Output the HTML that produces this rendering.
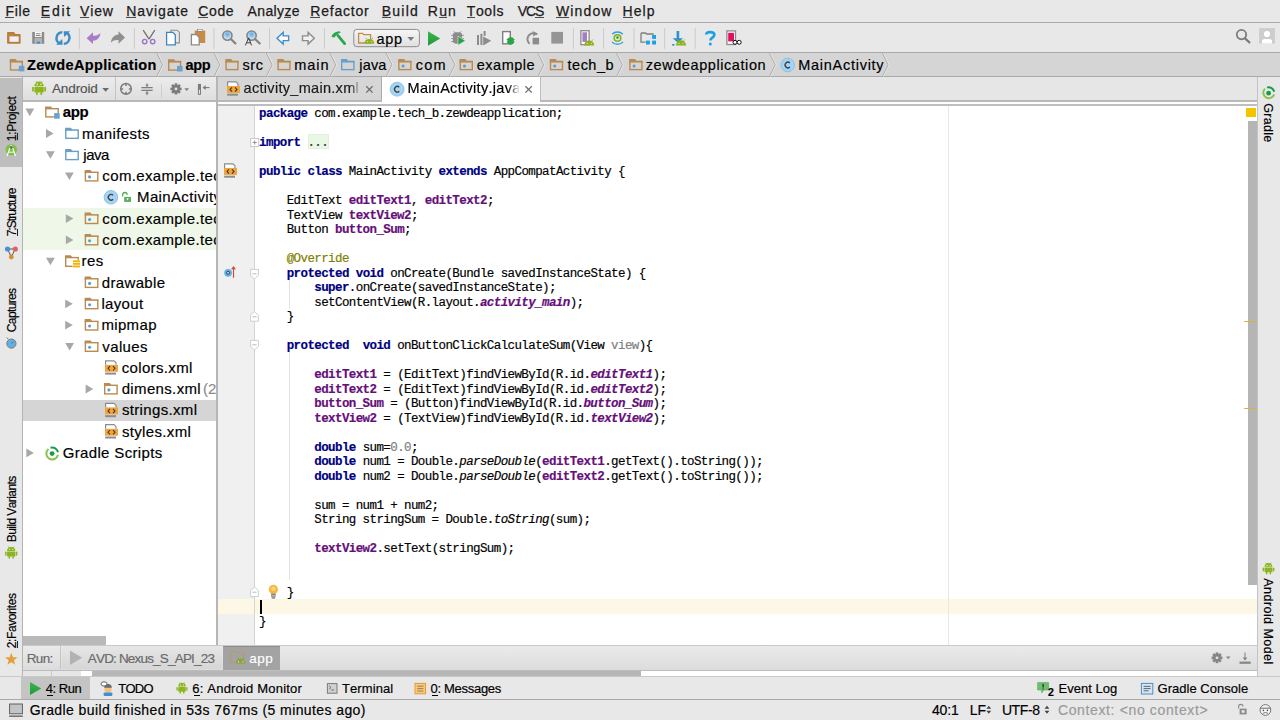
<!DOCTYPE html>
<html><head><meta charset="utf-8"><style>
html,body{margin:0;padding:0;width:1280px;height:720px;overflow:hidden;background:#e8e8e8;}
body{position:relative;font-family:'Liberation Sans',sans-serif;font-kerning:none;}
div,svg{position:absolute;}
div{-webkit-text-stroke:0.18px currentColor;}
</style></head><body>
<div style="left:0.00px;top:0.00px;width:1280px;height:22px;background:#e8e8e8;"></div>
<div style="left:0.00px;top:22.00px;width:1280px;height:1px;background:#ababab;"></div>
<div style="left:0.00px;top:23.00px;width:1280px;height:29px;background:#e8e8e8;"></div>
<div style="left:0.00px;top:52.00px;width:1280px;height:1px;background:#a9a9a9;"></div>
<div style="left:0.00px;top:53.00px;width:1280px;height:23px;background:#d5d5d5;"></div>
<div style="left:0.00px;top:76.00px;width:1280px;height:1px;background:#a9a9a9;"></div>
<div style="left:0.00px;top:77.00px;width:1280px;height:1px;background:#c6c6c6;"></div>
<div style="left:0.00px;top:77.00px;width:22px;height:599px;background:#e8e8e8;"></div>
<div style="left:0.00px;top:78.00px;width:22px;height:89px;background:#bebebe;"></div>
<div style="left:21.50px;top:77.00px;width:1.5px;height:599px;background:#b4b4b4;"></div>
<div style="left:23.00px;top:77.00px;width:194px;height:23px;background:linear-gradient(#ececec,#dedede);"></div>
<div style="left:115.00px;top:77.00px;width:1px;height:23px;background:#c4c4c4;"></div>
<div style="left:161.00px;top:84.00px;width:1px;height:14px;background:#cfcfcf;"></div>
<div style="left:23.00px;top:102.00px;width:193px;height:543px;background:#ffffff;"></div>
<div style="left:23.00px;top:207.85px;width:193px;height:42.6px;background:#eff7e8;"></div>
<div style="left:23.00px;top:399.55px;width:193px;height:21.3px;background:#d5d5d5;"></div>
<div style="left:23.00px;top:636.00px;width:83px;height:9px;background:#b9b9b9;"></div>
<div style="left:216.00px;top:77.00px;width:2px;height:568px;background:#b6b6b6;"></div>
<div style="left:218.00px;top:77.00px;width:1039px;height:23px;background:#e6e6e6;"></div>
<div style="left:218.00px;top:77.00px;width:163px;height:23px;background:#d6d6d6;"></div>
<div style="left:23.00px;top:100.00px;width:1234px;height:2px;background:#b8b8b8;"></div>
<div style="left:381.00px;top:77.00px;width:1px;height:23px;background:#acacac;"></div>
<div style="left:382.00px;top:77.00px;width:158px;height:27px;background:#ffffff;"></div>
<div style="left:540.00px;top:77.00px;width:1px;height:23px;background:#bdbdbd;"></div>
<div style="left:218.00px;top:102.00px;width:1039px;height:2px;background:#ffffff;"></div>
<div style="left:218.00px;top:104.00px;width:1039px;height:2px;background:#bebebe;"></div>
<div style="left:218.00px;top:106.00px;width:1039px;height:539px;background:#ffffff;"></div>
<div style="left:218.00px;top:106.00px;width:36px;height:539px;background:#f0f0f0;"></div>
<div style="left:254.00px;top:106.00px;width:1px;height:539px;background:#d4d4d4;"></div>
<div style="left:948.00px;top:106.00px;width:1px;height:539px;background:#e6e6e6;"></div>
<div style="left:218.00px;top:599.00px;width:1039px;height:14.5px;background:#fdf8e6;"></div>
<div style="left:254.00px;top:599.00px;width:1px;height:14.5px;background:#d4d4d4;"></div>
<div style="left:948.00px;top:599.00px;width:1px;height:14.5px;background:#ece8d8;"></div>
<div style="left:1257.00px;top:77.00px;width:1px;height:599px;background:#c3c3c3;"></div>
<div style="left:1258.00px;top:77.00px;width:22px;height:599px;background:#e8e8e8;"></div>
<div style="left:1248.00px;top:121.00px;width:9px;height:464px;background:#b5b5b5;"></div>
<div style="left:1246.00px;top:107.60px;width:9.5px;height:9.2px;background:#f2c500;"></div>
<div style="left:1244.00px;top:320.50px;width:13px;height:1.3px;background:#d9b43a;"></div>
<div style="left:1244.00px;top:407.80px;width:13px;height:1.3px;background:#d9b43a;"></div>
<div style="left:23.00px;top:645.00px;width:1234px;height:25px;background:linear-gradient(#ebebeb,#dcdcdc);"></div>
<div style="left:23.00px;top:645.00px;width:1234px;height:1px;background:#c9c9c9;"></div>
<div style="left:23.00px;top:669.50px;width:1234px;height:1px;background:#bdbdbd;"></div>
<div style="left:60.00px;top:646.00px;width:1px;height:23px;background:#c4c4c4;"></div>
<div style="left:62.00px;top:646.00px;width:160px;height:23px;background:linear-gradient(#e6e6e6,#d6d6d6);border-radius:2px;"></div>
<div style="left:222.50px;top:646.00px;width:57.5px;height:23.5px;background:#a3a3a3;"></div>
<div style="left:222.50px;top:646.00px;width:57.5px;height:1.2px;background:#8e8e8e;"></div>
<div style="left:23.00px;top:670.50px;width:1234px;height:6px;background:#ffffff;"></div>
<div style="left:23.00px;top:670.50px;width:58px;height:6px;background:#e6e6e6;"></div>
<div style="left:51.00px;top:670.50px;width:1px;height:6px;background:#c8c8c8;"></div>
<div style="left:92.00px;top:670.50px;width:549px;height:6px;background:#b7b7b7;"></div>
<div style="left:0.00px;top:676.00px;width:1280px;height:1px;background:#c9c9c9;"></div>
<div style="left:0.00px;top:677.00px;width:1280px;height:22px;background:#e8e8e8;"></div>
<div style="left:20.50px;top:677.00px;width:69.5px;height:22px;background:#c4c4c4;"></div>
<div style="left:0.00px;top:699.00px;width:1280px;height:1px;background:#a9a9a9;"></div>
<div style="left:0.00px;top:700.00px;width:1280px;height:20px;background:#e8e8e8;"></div>
<div style="left:5.45px;top:10.95px;font-family:'Liberation Sans', sans-serif;font-size:14px;color:#1b1b1b;line-height:0;white-space:pre;letter-spacing:0.671px;-webkit-text-stroke:0.25px #1b1b1b;">File</div>
<div style="left:5.45px;top:16.90px;width:8.55px;height:1.3px;background:#4a4a4a;"></div>
<div style="left:40.85px;top:10.95px;font-family:'Liberation Sans', sans-serif;font-size:14px;color:#1b1b1b;line-height:0;white-space:pre;letter-spacing:1.709px;-webkit-text-stroke:0.25px #1b1b1b;">Edit</div>
<div style="left:40.85px;top:16.90px;width:9.34px;height:1.3px;background:#4a4a4a;"></div>
<div style="left:79.94px;top:10.95px;font-family:'Liberation Sans', sans-serif;font-size:14px;color:#1b1b1b;line-height:0;white-space:pre;letter-spacing:0.894px;-webkit-text-stroke:0.25px #1b1b1b;">View</div>
<div style="left:79.94px;top:16.90px;width:9.34px;height:1.3px;background:#4a4a4a;"></div>
<div style="left:126.25px;top:10.95px;font-family:'Liberation Sans', sans-serif;font-size:14px;color:#1b1b1b;line-height:0;white-space:pre;letter-spacing:0.945px;-webkit-text-stroke:0.25px #1b1b1b;">Navigate</div>
<div style="left:126.25px;top:16.90px;width:10.11px;height:1.3px;background:#4a4a4a;"></div>
<div style="left:198.29px;top:10.95px;font-family:'Liberation Sans', sans-serif;font-size:14px;color:#1b1b1b;line-height:0;white-space:pre;letter-spacing:0.621px;-webkit-text-stroke:0.25px #1b1b1b;">Code</div>
<div style="left:198.29px;top:16.90px;width:10.11px;height:1.3px;background:#4a4a4a;"></div>
<div style="left:247.57px;top:10.95px;font-family:'Liberation Sans', sans-serif;font-size:14px;color:#1b1b1b;line-height:0;white-space:pre;letter-spacing:0.374px;-webkit-text-stroke:0.25px #1b1b1b;">Analyze</div>
<div style="left:284.46px;top:16.90px;width:7.0px;height:1.3px;background:#4a4a4a;"></div>
<div style="left:310.35px;top:10.95px;font-family:'Liberation Sans', sans-serif;font-size:14px;color:#1b1b1b;line-height:0;white-space:pre;letter-spacing:0.782px;-webkit-text-stroke:0.25px #1b1b1b;">Refactor</div>
<div style="left:310.35px;top:16.90px;width:10.11px;height:1.3px;background:#4a4a4a;"></div>
<div style="left:381.65px;top:10.95px;font-family:'Liberation Sans', sans-serif;font-size:14px;color:#1b1b1b;line-height:0;white-space:pre;letter-spacing:1.28px;-webkit-text-stroke:0.25px #1b1b1b;">Build</div>
<div style="left:381.65px;top:16.90px;width:9.34px;height:1.3px;background:#4a4a4a;"></div>
<div style="left:427.85px;top:10.95px;font-family:'Liberation Sans', sans-serif;font-size:14px;color:#1b1b1b;line-height:0;white-space:pre;letter-spacing:1.188px;-webkit-text-stroke:0.25px #1b1b1b;">Run</div>
<div style="left:439.15px;top:16.90px;width:7.79px;height:1.3px;background:#4a4a4a;"></div>
<div style="left:466.69px;top:10.95px;font-family:'Liberation Sans', sans-serif;font-size:14px;color:#1b1b1b;line-height:0;white-space:pre;letter-spacing:0.646px;-webkit-text-stroke:0.25px #1b1b1b;">Tools</div>
<div style="left:466.69px;top:16.90px;width:8.55px;height:1.3px;background:#4a4a4a;"></div>
<div style="left:517.74px;top:10.95px;font-family:'Liberation Sans', sans-serif;font-size:14px;color:#1b1b1b;line-height:0;white-space:pre;letter-spacing:-1.141px;-webkit-text-stroke:0.25px #1b1b1b;">VCS</div>
<div style="left:534.90px;top:16.90px;width:9.34px;height:1.3px;background:#4a4a4a;"></div>
<div style="left:555.94px;top:10.95px;font-family:'Liberation Sans', sans-serif;font-size:14px;color:#1b1b1b;line-height:0;white-space:pre;letter-spacing:1.147px;-webkit-text-stroke:0.25px #1b1b1b;">Window</div>
<div style="left:555.94px;top:16.90px;width:13.21px;height:1.3px;background:#4a4a4a;"></div>
<div style="left:622.55px;top:10.95px;font-family:'Liberation Sans', sans-serif;font-size:14px;color:#1b1b1b;line-height:0;white-space:pre;letter-spacing:1.081px;-webkit-text-stroke:0.25px #1b1b1b;">Help</div>
<div style="left:622.55px;top:16.90px;width:10.11px;height:1.3px;background:#4a4a4a;"></div>
<div style="left:26.97px;top:65.18px;font-family:'Liberation Sans', sans-serif;font-size:14.5px;color:#000;line-height:0;white-space:pre;font-weight:bold;letter-spacing:0.358px;">ZewdeApplication</div>
<div style="left:185.58px;top:65.18px;font-family:'Liberation Sans', sans-serif;font-size:14.5px;color:#000;line-height:0;white-space:pre;font-weight:bold;letter-spacing:-0.38px;">app</div>
<div style="left:242.40px;top:65.18px;font-family:'Liberation Sans', sans-serif;font-size:14.5px;color:#000;line-height:0;white-space:pre;letter-spacing:0.579px;">src</div>
<div style="left:294.34px;top:65.18px;font-family:'Liberation Sans', sans-serif;font-size:14.5px;color:#000;line-height:0;white-space:pre;letter-spacing:0.925px;">main</div>
<div style="left:359.35px;top:65.18px;font-family:'Liberation Sans', sans-serif;font-size:14.5px;color:#000;line-height:0;white-space:pre;letter-spacing:0.149px;">java</div>
<div style="left:415.78px;top:65.18px;font-family:'Liberation Sans', sans-serif;font-size:14.5px;color:#000;line-height:0;white-space:pre;letter-spacing:1.189px;">com</div>
<div style="left:476.78px;top:65.18px;font-family:'Liberation Sans', sans-serif;font-size:14.5px;color:#000;line-height:0;white-space:pre;letter-spacing:0.509px;">example</div>
<div style="left:567.58px;top:65.18px;font-family:'Liberation Sans', sans-serif;font-size:14.5px;color:#000;line-height:0;white-space:pre;letter-spacing:0.479px;">tech_b</div>
<div style="left:645.71px;top:65.18px;font-family:'Liberation Sans', sans-serif;font-size:14.5px;color:#000;line-height:0;white-space:pre;letter-spacing:0.579px;">zewdeapplication</div>
<div style="left:798.21px;top:65.18px;font-family:'Liberation Sans', sans-serif;font-size:14.5px;color:#000;line-height:0;white-space:pre;letter-spacing:0.733px;">MainActivity</div>
<div style="left:23.0px;top:101.0px;width:193px;height:544px;overflow:hidden;">
<div style="left:39.86px;top:11.20px;font-family:'Liberation Sans', sans-serif;font-size:15px;color:#000;line-height:0;white-space:pre;font-weight:bold;letter-spacing:-0.456px;">app</div>
<div style="left:59.00px;top:32.50px;font-family:'Liberation Sans', sans-serif;font-size:15px;color:#000;line-height:0;white-space:pre;letter-spacing:0.419px;">manifests</div>
<div style="left:60.37px;top:53.80px;font-family:'Liberation Sans', sans-serif;font-size:15px;color:#000;line-height:0;white-space:pre;letter-spacing:-0.494px;">java</div>
<div style="left:79.36px;top:75.10px;font-family:'Liberation Sans', sans-serif;font-size:15px;color:#000;line-height:0;white-space:pre;letter-spacing:0.35px;">com.example.tech_b.zewdeapplication</div>
<div style="left:114.07px;top:96.40px;font-family:'Liberation Sans', sans-serif;font-size:15px;color:#000;line-height:0;white-space:pre;letter-spacing:0.35px;">MainActivity</div>
<div style="left:79.36px;top:117.70px;font-family:'Liberation Sans', sans-serif;font-size:15px;color:#000;line-height:0;white-space:pre;letter-spacing:0.35px;">com.example.tech_b.zewdeapplication</div>
<div style="left:79.36px;top:139.00px;font-family:'Liberation Sans', sans-serif;font-size:15px;color:#000;line-height:0;white-space:pre;letter-spacing:0.35px;">com.example.tech_b.zewdeapplication</div>
<div style="left:58.60px;top:160.30px;font-family:'Liberation Sans', sans-serif;font-size:15px;color:#000;line-height:0;white-space:pre;letter-spacing:0.35px;">res</div>
<div style="left:78.77px;top:181.60px;font-family:'Liberation Sans', sans-serif;font-size:15px;color:#000;line-height:0;white-space:pre;letter-spacing:0.35px;">drawable</div>
<div style="left:78.39px;top:202.90px;font-family:'Liberation Sans', sans-serif;font-size:15px;color:#000;line-height:0;white-space:pre;letter-spacing:0.35px;">layout</div>
<div style="left:78.40px;top:224.20px;font-family:'Liberation Sans', sans-serif;font-size:15px;color:#000;line-height:0;white-space:pre;letter-spacing:0.35px;">mipmap</div>
<div style="left:79.35px;top:245.50px;font-family:'Liberation Sans', sans-serif;font-size:15px;color:#000;line-height:0;white-space:pre;letter-spacing:0.35px;">values</div>
<div style="left:98.66px;top:266.80px;font-family:'Liberation Sans', sans-serif;font-size:15px;color:#000;line-height:0;white-space:pre;letter-spacing:0.35px;">colors.xml</div>
<div style="left:98.67px;top:288.10px;font-family:'Liberation Sans', sans-serif;font-size:15px;color:#000;line-height:0;white-space:pre;letter-spacing:0.35px;">dimens.xml</div>
<div style="left:98.88px;top:309.40px;font-family:'Liberation Sans', sans-serif;font-size:15px;color:#000;line-height:0;white-space:pre;letter-spacing:0.35px;">strings.xml</div>
<div style="left:98.88px;top:330.70px;font-family:'Liberation Sans', sans-serif;font-size:15px;color:#000;line-height:0;white-space:pre;letter-spacing:0.35px;">styles.xml</div>
<div style="left:39.65px;top:352.00px;font-family:'Liberation Sans', sans-serif;font-size:15px;color:#000;line-height:0;white-space:pre;letter-spacing:0.35px;">Gradle Scripts</div>
</div>
<div style="left:51.97px;top:89.19px;font-family:'Liberation Sans', sans-serif;font-size:13.6px;color:#555555;line-height:0;white-space:pre;letter-spacing:-0.162px;">Android</div>
<div style="left:240.0px;top:77.0px;width:122px;height:23px;overflow:hidden;-webkit-mask-image:linear-gradient(90deg,#000 110px,transparent 121px);">
<div style="left:3.58px;top:10.58px;font-family:'Liberation Sans', sans-serif;font-size:14.5px;color:#1a1a1a;line-height:0;white-space:pre;letter-spacing:0.3px;">activity_main.xml</div>
</div>
<div style="left:405.0px;top:77.0px;width:116px;height:23px;overflow:hidden;-webkit-mask-image:linear-gradient(90deg,#000 103px,transparent 115px);">
<div style="left:2.51px;top:10.58px;font-family:'Liberation Sans', sans-serif;font-size:14.5px;color:#000;line-height:0;white-space:pre;letter-spacing:0.3px;">MainActivity.java</div>
</div>
<div style="left:26.69px;top:658.72px;font-family:'Liberation Sans', sans-serif;font-size:13.5px;color:#6a6a6a;line-height:0;white-space:pre;letter-spacing:-0.659px;">Run:</div>
<div style="left:87.77px;top:658.72px;font-family:'Liberation Sans', sans-serif;font-size:13.5px;color:#6a6a6a;line-height:0;white-space:pre;letter-spacing:-0.817px;">AVD: Nexus_S_API_23</div>
<div style="left:249.23px;top:658.72px;font-family:'Liberation Sans', sans-serif;font-size:13.5px;color:#ffffff;line-height:0;white-space:pre;letter-spacing:0.508px;">app</div>
<div style="left:45.70px;top:688.70px;font-family:'Liberation Sans', sans-serif;font-size:13px;color:#000;line-height:0;white-space:pre;letter-spacing:-0.432px;">4: Run</div>
<div style="left:46.50px;top:694.80px;width:6.5px;height:1.1px;background:#000;"></div>
<div style="left:118.31px;top:688.70px;font-family:'Liberation Sans', sans-serif;font-size:13px;color:#000;line-height:0;white-space:pre;letter-spacing:-0.746px;">TODO</div>
<div style="left:192.34px;top:688.70px;font-family:'Liberation Sans', sans-serif;font-size:13px;color:#000;line-height:0;white-space:pre;letter-spacing:0.191px;">6: Android Monitor</div>
<div style="left:193.50px;top:694.80px;width:6.5px;height:1.1px;background:#000;"></div>
<div style="left:342.01px;top:688.70px;font-family:'Liberation Sans', sans-serif;font-size:13px;color:#000;line-height:0;white-space:pre;letter-spacing:0.085px;">Terminal</div>
<div style="left:430.49px;top:688.70px;font-family:'Liberation Sans', sans-serif;font-size:13px;color:#000;line-height:0;white-space:pre;letter-spacing:-0.293px;">0: Messages</div>
<div style="left:431.50px;top:694.80px;width:6.5px;height:1.1px;background:#000;"></div>
<div style="left:1058.53px;top:688.70px;font-family:'Liberation Sans', sans-serif;font-size:13px;color:#000;line-height:0;white-space:pre;letter-spacing:0.032px;">Event Log</div>
<div style="left:1157.55px;top:688.70px;font-family:'Liberation Sans', sans-serif;font-size:13px;color:#000;line-height:0;white-space:pre;letter-spacing:0.023px;">Gradle Console</div>
<div style="left:29.80px;top:709.65px;font-family:'Liberation Sans', sans-serif;font-size:14px;color:#000;line-height:0;white-space:pre;letter-spacing:0.402px;">Gradle build finished in 53s 767ms (5 minutes ago)</div>
<div style="left:931.93px;top:709.65px;font-family:'Liberation Sans', sans-serif;font-size:14px;color:#000;line-height:0;white-space:pre;letter-spacing:-0.164px;">40:1</div>
<div style="left:969.85px;top:709.65px;font-family:'Liberation Sans', sans-serif;font-size:14px;color:#000;line-height:0;white-space:pre;letter-spacing:-0.029px;">LF</div>
<div style="left:1001.92px;top:709.65px;font-family:'Liberation Sans', sans-serif;font-size:14px;color:#000;line-height:0;white-space:pre;letter-spacing:-0.393px;">UTF-8</div>
<div style="left:1057.89px;top:709.65px;font-family:'Liberation Sans', sans-serif;font-size:14px;color:#9a9a9a;line-height:0;white-space:pre;letter-spacing:0.641px;">Context: &lt;no context&gt;</div>
<div style="left:308.00px;top:134.20px;width:20.75px;height:14.5px;background:#e9f7e5;box-shadow:inset 0 0 0 1px #e2f1dd;"></div>
<div style="left:288.50px;top:279.50px;width:1px;height:29px;background:#e3e3e3;"></div>
<div style="left:288.50px;top:352.00px;width:1px;height:228px;background:#e3e3e3;"></div>
<div style="left:259.10px;top:113.87px;font-family:'Liberation Mono', monospace;font-size:12.5px;color:#000;line-height:0;white-space:pre;letter-spacing:-0.6px;"><span style="color:#000080;font-weight:bold;">package</span> com.example.tech_b.zewdeapplication;</div>
<div style="left:259.10px;top:142.91px;font-family:'Liberation Mono', monospace;font-size:12.5px;color:#000;line-height:0;white-space:pre;letter-spacing:-0.6px;"><span style="color:#000080;font-weight:bold;">import</span> <span style="color:#333;">...</span></div>
<div style="left:259.10px;top:171.95px;font-family:'Liberation Mono', monospace;font-size:12.5px;color:#000;line-height:0;white-space:pre;letter-spacing:-0.6px;"><span style="color:#000080;font-weight:bold;">public</span> <span style="color:#000080;font-weight:bold;">class</span> MainActivity <span style="color:#000080;font-weight:bold;">extends</span> AppCompatActivity {</div>
<div style="left:259.10px;top:200.99px;font-family:'Liberation Mono', monospace;font-size:12.5px;color:#000;line-height:0;white-space:pre;letter-spacing:-0.6px;">    EditText <span style="color:#660e7a;font-weight:bold;">editText1</span>, <span style="color:#660e7a;font-weight:bold;">editText2</span>;</div>
<div style="left:259.10px;top:215.51px;font-family:'Liberation Mono', monospace;font-size:12.5px;color:#000;line-height:0;white-space:pre;letter-spacing:-0.6px;">    TextView <span style="color:#660e7a;font-weight:bold;">textView2</span>;</div>
<div style="left:259.10px;top:230.03px;font-family:'Liberation Mono', monospace;font-size:12.5px;color:#000;line-height:0;white-space:pre;letter-spacing:-0.6px;">    Button <span style="color:#660e7a;font-weight:bold;">button_Sum</span>;</div>
<div style="left:259.10px;top:259.07px;font-family:'Liberation Mono', monospace;font-size:12.5px;color:#000;line-height:0;white-space:pre;letter-spacing:-0.6px;">    <span style="color:#808000;">@Override</span></div>
<div style="left:259.10px;top:273.59px;font-family:'Liberation Mono', monospace;font-size:12.5px;color:#000;line-height:0;white-space:pre;letter-spacing:-0.6px;">    <span style="color:#000080;font-weight:bold;">protected</span> <span style="color:#000080;font-weight:bold;">void</span> onCreate(Bundle savedInstanceState) {</div>
<div style="left:259.10px;top:288.11px;font-family:'Liberation Mono', monospace;font-size:12.5px;color:#000;line-height:0;white-space:pre;letter-spacing:-0.6px;">        <span style="color:#000080;font-weight:bold;">super</span>.onCreate(savedInstanceState);</div>
<div style="left:259.10px;top:302.63px;font-family:'Liberation Mono', monospace;font-size:12.5px;color:#000;line-height:0;white-space:pre;letter-spacing:-0.6px;">        setContentView(R.layout.<span style="color:#660e7a;font-weight:bold;font-style:italic;">activity_main</span>);</div>
<div style="left:259.10px;top:317.15px;font-family:'Liberation Mono', monospace;font-size:12.5px;color:#000;line-height:0;white-space:pre;letter-spacing:-0.6px;">    }</div>
<div style="left:259.10px;top:346.19px;font-family:'Liberation Mono', monospace;font-size:12.5px;color:#000;line-height:0;white-space:pre;letter-spacing:-0.6px;">    <span style="color:#000080;font-weight:bold;">protected</span>  <span style="color:#000080;font-weight:bold;">void</span> onButtonClickCalculateSum(View <span style="color:#808080;">view</span>){</div>
<div style="left:259.10px;top:375.23px;font-family:'Liberation Mono', monospace;font-size:12.5px;color:#000;line-height:0;white-space:pre;letter-spacing:-0.6px;">        <span style="color:#660e7a;font-weight:bold;">editText1</span> = (EditText)findViewById(R.id.<span style="color:#660e7a;font-weight:bold;font-style:italic;">editText1</span>);</div>
<div style="left:259.10px;top:389.75px;font-family:'Liberation Mono', monospace;font-size:12.5px;color:#000;line-height:0;white-space:pre;letter-spacing:-0.6px;">        <span style="color:#660e7a;font-weight:bold;">editText2</span> = (EditText)findViewById(R.id.<span style="color:#660e7a;font-weight:bold;font-style:italic;">editText2</span>);</div>
<div style="left:259.10px;top:404.27px;font-family:'Liberation Mono', monospace;font-size:12.5px;color:#000;line-height:0;white-space:pre;letter-spacing:-0.6px;">        <span style="color:#660e7a;font-weight:bold;">button_Sum</span> = (Button)findViewById(R.id.<span style="color:#660e7a;font-weight:bold;font-style:italic;">button_Sum</span>);</div>
<div style="left:259.10px;top:418.79px;font-family:'Liberation Mono', monospace;font-size:12.5px;color:#000;line-height:0;white-space:pre;letter-spacing:-0.6px;">        <span style="color:#660e7a;font-weight:bold;">textView2</span> = (TextView)findViewById(R.id.<span style="color:#660e7a;font-weight:bold;font-style:italic;">textView2</span>);</div>
<div style="left:259.10px;top:447.83px;font-family:'Liberation Mono', monospace;font-size:12.5px;color:#000;line-height:0;white-space:pre;letter-spacing:-0.6px;">        <span style="color:#000080;font-weight:bold;">double</span> sum=<span style="color:#808080;">0.0</span>;</div>
<div style="left:259.10px;top:462.35px;font-family:'Liberation Mono', monospace;font-size:12.5px;color:#000;line-height:0;white-space:pre;letter-spacing:-0.6px;">        <span style="color:#000080;font-weight:bold;">double</span> num1 = Double.<span style="font-style:italic;">parseDouble</span>(<span style="color:#660e7a;font-weight:bold;">editText1</span>.getText().toString());</div>
<div style="left:259.10px;top:476.87px;font-family:'Liberation Mono', monospace;font-size:12.5px;color:#000;line-height:0;white-space:pre;letter-spacing:-0.6px;">        <span style="color:#000080;font-weight:bold;">double</span> num2 = Double.<span style="font-style:italic;">parseDouble</span>(<span style="color:#660e7a;font-weight:bold;">editText2</span>.getText().toString());</div>
<div style="left:259.10px;top:505.91px;font-family:'Liberation Mono', monospace;font-size:12.5px;color:#000;line-height:0;white-space:pre;letter-spacing:-0.6px;">        sum = num1 + num2;</div>
<div style="left:259.10px;top:520.43px;font-family:'Liberation Mono', monospace;font-size:12.5px;color:#000;line-height:0;white-space:pre;letter-spacing:-0.6px;">        String stringSum = Double.<span style="font-style:italic;">toString</span>(sum);</div>
<div style="left:259.10px;top:549.47px;font-family:'Liberation Mono', monospace;font-size:12.5px;color:#000;line-height:0;white-space:pre;letter-spacing:-0.6px;">        <span style="color:#660e7a;font-weight:bold;">textView2</span>.setText(stringSum);</div>
<div style="left:259.10px;top:593.03px;font-family:'Liberation Mono', monospace;font-size:12.5px;color:#000;line-height:0;white-space:pre;letter-spacing:-0.6px;">    }</div>
<div style="left:259.10px;top:622.07px;font-family:'Liberation Mono', monospace;font-size:12.5px;color:#000;line-height:0;white-space:pre;letter-spacing:-0.6px;">}</div>
<div style="left:259.80px;top:599.50px;width:2.2px;height:14px;background:#000;"></div>
<div style="left:16.20px;top:136.76px;font-family:'Liberation Sans', sans-serif;font-size:12px;color:#000;line-height:0;white-space:pre;letter-spacing:-0.294px;transform-origin:0 4.16px;transform:rotate(-90deg);">1:Project</div>
<div style="left:16.20px;top:232.46px;font-family:'Liberation Sans', sans-serif;font-size:12px;color:#000;line-height:0;white-space:pre;letter-spacing:-1.004px;transform-origin:0 4.16px;transform:rotate(-90deg);">7:Structure</div>
<div style="left:16.20px;top:328.45px;font-family:'Liberation Sans', sans-serif;font-size:12px;color:#000;line-height:0;white-space:pre;letter-spacing:-0.635px;transform-origin:0 4.16px;transform:rotate(-90deg);">Captures</div>
<div style="left:16.20px;top:537.83px;font-family:'Liberation Sans', sans-serif;font-size:12px;color:#000;line-height:0;white-space:pre;letter-spacing:-0.586px;transform-origin:0 4.16px;transform:rotate(-90deg);">Build Variants</div>
<div style="left:16.20px;top:644.15px;font-family:'Liberation Sans', sans-serif;font-size:12px;color:#000;line-height:0;white-space:pre;letter-spacing:-0.422px;transform-origin:0 4.16px;transform:rotate(-90deg);">2:Favorites</div>
<div style="left:1264.20px;top:99.04px;font-family:'Liberation Sans', sans-serif;font-size:12.5px;color:#000;line-height:0;white-space:pre;letter-spacing:0.273px;transform-origin:0 4.33px;transform:rotate(90deg);">Gradle</div>
<div style="left:1264.20px;top:574.39px;font-family:'Liberation Sans', sans-serif;font-size:12.5px;color:#000;line-height:0;white-space:pre;letter-spacing:0.438px;transform-origin:0 4.33px;transform:rotate(90deg);">Android Model</div>
<div style="left:23.0px;top:101.0px;width:193px;height:544px;overflow:hidden;">
<div style="left:180.00px;top:288.10px;font-family:'Liberation Sans', sans-serif;font-size:15px;color:#8c8c8c;line-height:0;white-space:pre;">(2)</div>
</div>
<div style="left:17.40px;top:133.20px;width:1.1px;height:6.8px;background:#222;"></div>
<div style="left:17.40px;top:229.20px;width:1.1px;height:6.8px;background:#222;"></div>
<div style="left:17.40px;top:640.90px;width:1.1px;height:6.8px;background:#222;"></div>
<svg style="left:0;top:0" width="1280" height="720" viewBox="0 0 1280 720"><rect x="78.9" y="28.2" width="1" height="20.6" fill="#cacaca"/><rect x="133.9" y="28.2" width="1" height="20.6" fill="#cacaca"/><rect x="213.4" y="28.2" width="1" height="20.6" fill="#cacaca"/><rect x="269.0" y="28.2" width="1" height="20.6" fill="#cacaca"/><rect x="323.9" y="28.2" width="1" height="20.6" fill="#cacaca"/><rect x="572.9" y="28.2" width="1" height="20.6" fill="#cacaca"/><rect x="603.1" y="28.2" width="1" height="20.6" fill="#cacaca"/><rect x="633.5" y="28.2" width="1" height="20.6" fill="#cacaca"/><rect x="664.1" y="28.2" width="1" height="20.6" fill="#cacaca"/><rect x="694.7" y="28.2" width="1" height="20.6" fill="#cacaca"/><path d="M7.8 32.8 H13.6 L15 34.6 H19.9 V43 H7.8 Z" fill="#bf8443" stroke="#b97a3a" stroke-width="1.4" stroke-linejoin="round"/><rect x="9.5" y="36.4" width="9.2" height="5.4" fill="#eef1f6"/><path d="M32.2 32 H44.2 V43.8 H32.2 Z" fill="#8c8c8c"/><rect x="34.9" y="32" width="6.8" height="4.9" fill="#ffffff"/><rect x="35.8" y="33.3" width="4.8" height="0.9" fill="#777"/><rect x="35.8" y="35" width="4.8" height="0.9" fill="#777"/><rect x="34.6" y="38" width="7.4" height="5.8" fill="#b3b3b3"/><rect x="36.8" y="41.6" width="3.2" height="2" fill="#3d8fd0"/><path d="M62.2 32.2 A6 6 0 0 0 59.2 43.2" fill="none" stroke="#3b8dc5" stroke-width="2.4"/><path d="M56 44.8 L62.6 44.8 L62.2 39 Z" fill="#3b8dc5"/><path d="M63.8 43.8 A6 6 0 0 0 67 33" fill="none" stroke="#3b8dc5" stroke-width="2.4"/><path d="M70.1 31.2 L63.6 31.2 L64.2 37 Z" fill="#3b8dc5"/><path d="M86.6 38.2 L93 32.2 L93 35.8 C96 35.8 98.8 35 100.3 33 C100.2 37.8 97 40.6 93 40.8 L93 44 Z" fill="#a97cc6"/><path d="M125 37.4 L118.5 31.2 L118.5 34.6 C114.2 34.8 111.2 38 111 42.8 C112.6 40.4 115.4 39.8 118.5 40 L118.5 43.7 Z" fill="#8f8f8f"/><path d="M143.2 30.2 L149 39.2 M154.8 30.2 L149 39.2" stroke="#6e6e6e" stroke-width="1.2" fill="none"/><circle cx="144.7" cy="41.6" r="2.2" fill="none" stroke="#a073c4" stroke-width="1.4"/><circle cx="152.7" cy="41.6" r="2.2" fill="none" stroke="#a073c4" stroke-width="1.4"/><path d="M170.9 30.2 H177.2 L179.4 32.4 V42.9 H170.9 Z" fill="#e8e8e8" stroke="#8e8e8e" stroke-width="1.1"/><path d="M166.6 32.4 H172.9 L175.3 34.8 V44.9 H166.6 Z" fill="#ffffff" stroke="#3f86bd" stroke-width="1.3"/><rect x="194.8" y="30.6" width="10.4" height="12.4" fill="#c98a45"/><rect x="197.3" y="29.3" width="5.4" height="1.9" fill="#fff" stroke="#666" stroke-width="0.5"/><path d="M191.4 34.5 H196.4 L199.2 37.3 V44.9 H191.4 Z" fill="#ffffff" stroke="#8a8a8a" stroke-width="1.3"/><defs><radialGradient id="lens" cx="0.5" cy="0.35" r="0.6"><stop offset="0" stop-color="#5aa9e6"/><stop offset="1" stop-color="#e6eef5"/></radialGradient></defs><circle cx="227.4" cy="35.6" r="4.6" fill="url(#lens)" stroke="#858585" stroke-width="1.6"/><path d="M230.8 39 L235.4 43.4" stroke="#858585" stroke-width="2.2" stroke-linecap="round"/><circle cx="251.6" cy="35.6" r="4.6" fill="url(#lens)" stroke="#858585" stroke-width="1.6"/><path d="M255 39 L259.6 43.4" stroke="#858585" stroke-width="2.2" stroke-linecap="round"/><path d="M245.4 45.4 L248.6 37.8 L251.6 45.4 M246.6 42.8 H250.6" stroke="#303030" stroke-width="0.9" fill="none"/><path d="M277 38.2 L283.2 32.4 V35.9 H288.6 V40.6 H283.2 V44.1 Z" fill="#fdfdfd" stroke="#3e8fc8" stroke-width="1.4" stroke-linejoin="miter"/><path d="M314.3 38.2 L308.1 32.4 V35.9 H302.5 V40.6 H308.1 V44.1 Z" fill="#f2f2f2" stroke="#8c8c8c" stroke-width="1.4"/><path d="M337.8 35.4 L344.6 43.6" stroke="#2aa74a" stroke-width="2.8" stroke-linecap="round"/><path d="M331.6 37 C331.8 34.4 334.6 31.6 339.6 31.2 L340.6 32.8 C338 33.4 336 34.8 334.6 37.6 Z" fill="#2aa74a"/><defs><linearGradient id="cmb" x1="0" y1="0" x2="0" y2="1"><stop offset="0" stop-color="#f6f6f6"/><stop offset="1" stop-color="#e0e0e0"/></linearGradient></defs><rect x="353.8" y="29.4" width="65.6" height="17.3" rx="3" fill="url(#cmb)" stroke="#8d8d8d" stroke-width="1"/><path d="M358.6 33.4 H362.6 L363.6 34.6 H370.6 V43 H358.6 Z" fill="none" stroke="#c58d4b" stroke-width="1.3"/><path d="M364.4 43.8 A4.9 4.9 0 0 1 374.2 43.8 Z" fill="#8db21e"/><path d="M365.6 37.8 L366.6 39.2 M373 37.8 L372 39.2" stroke="#8db21e" stroke-width="0.8"/><circle cx="367.3" cy="41.7" r="0.5" fill="#fff"/><circle cx="371.3" cy="41.7" r="0.5" fill="#fff"/><path d="M407.4 36.9 H414.2 L410.8 41 Z" fill="#7d7d7d"/><defs><linearGradient id="grn" x1="0" y1="0" x2="0" y2="1"><stop offset="0" stop-color="#3ab54a"/><stop offset="1" stop-color="#1f9a3c"/></linearGradient></defs><path d="M428 31.2 L440.2 38.4 L428 45.7 Z" fill="url(#grn)"/><path d="M453 34 C453 31.6 462 31.6 462 34 V41.4 C462 44.6 453 44.6 453 41.4 Z" fill="#8c8c8c"/><path d="M451.3 35.4 H463.8 M451.3 38.6 H463.8 M451.3 41.6 H463.8 M454 31.4 L455.4 33 M461 31.4 L459.6 33" stroke="#8c8c8c" stroke-width="1"/><path d="M458 36.3 L465.4 40.7 L458 45.2 Z" fill="#26a244" stroke="#e8e8e8" stroke-width="0.6"/><rect x="477" y="35" width="2" height="10" fill="#8c8c8c"/><rect x="480.4" y="33.8" width="2" height="11.2" fill="#8c8c8c"/><rect x="483.6" y="31" width="2" height="4.8" fill="#8c8c8c"/><path d="M483.2 36.4 L491.2 40.8 L483.2 45.4 Z" fill="#8c8c8c"/><rect x="502.7" y="31.6" width="7.6" height="12.2" fill="#fff" stroke="#7f7f7f" stroke-width="1.4"/><path d="M507.4 39 C507.4 36.8 513.8 36.8 513.8 39 V42.6 C513.8 45.4 507.4 45.4 507.4 42.6 Z" fill="#29a544"/><path d="M506.6 39.6 H514.6 M506.6 42 H514.6" stroke="#29a544" stroke-width="0.9"/><path d="M537.2 34.6 A5.6 5.6 0 1 0 529.6 43.8" fill="none" stroke="#8c8c8c" stroke-width="2"/><path d="M532.6 31 L537.6 33.6 L533.4 36.6 Z" fill="#8c8c8c"/><rect x="532.6" y="37.8" width="6.5" height="6.6" fill="#8c8c8c"/><rect x="551.3" y="31.9" width="11.7" height="11.7" fill="#959595"/><rect x="580.9" y="30.7" width="8.2" height="14" fill="#fff" stroke="#8a8a8a" stroke-width="1.3"/><rect x="582.4" y="32.3" width="4.6" height="9.6" fill="#a67cc4"/><path d="M584.2 45.6 A5 5 0 0 1 594.2 45.6 Z" fill="#8db21e"/><path d="M585.4 39.4 L586.4 40.8 M593 39.4 L592 40.8" stroke="#8db21e" stroke-width="0.8"/><circle cx="587.2" cy="43.6" r="0.5" fill="#fff"/><circle cx="591.2" cy="43.6" r="0.5" fill="#fff"/><path d="M612.2 34.2 A6.4 5 0 0 1 622.8 34.2" fill="none" stroke="#27a3df" stroke-width="1.3"/><path d="M612 41.8 A6.4 5 0 0 0 623 41.8" fill="none" stroke="#27a3df" stroke-width="1.3"/><circle cx="617.5" cy="38" r="3.3" fill="none" stroke="#89b01d" stroke-width="1.6"/><circle cx="617.5" cy="37.6" r="1.3" fill="#22a24a"/><path d="M641 33 H645.6 L646.6 34 H653.8 M641 33 V42.2 H645.6" fill="none" stroke="#7e7e7e" stroke-width="1.3"/><rect x="652.1" y="35" width="3.9" height="3.9" fill="#1ca0e8"/><rect x="646" y="40.6" width="3.9" height="3.9" fill="#1ca0e8"/><rect x="652.1" y="40.6" width="3.9" height="3.9" fill="#1ca0e8"/><rect x="676.6" y="31" width="2.6" height="8" fill="#2b8fd0"/><path d="M672.6 38.2 H683 L677.9 42.8 Z" fill="#2b8fd0"/><rect x="672.2" y="44" width="2.2" height="1.6" fill="#2b8fd0"/><path d="M675.9 45.4 A5.1 5.1 0 0 1 686.1 45.4 Z" fill="#8db21e"/><path d="M677.2 39.4 L678.2 40.8 M684.8 39.4 L683.8 40.8" stroke="#8db21e" stroke-width="0.8"/><circle cx="679" cy="43.4" r="0.5" fill="#fff"/><circle cx="683" cy="43.4" r="0.5" fill="#fff"/><path d="M706.2 34.6 C706.2 31.6 714.4 31 714.4 34.8 C714.4 37.6 710.4 37.6 710.4 40.4" fill="none" stroke="#1ba1e2" stroke-width="2.6"/><circle cx="710.3" cy="44" r="1.5" fill="#1ba1e2"/><rect x="726.9" y="30.9" width="8.6" height="13.6" fill="#fff" stroke="#8a8a8a" stroke-width="1.3"/><rect x="728.2" y="32.8" width="5.8" height="8.6" fill="#e0115f"/><circle cx="735" cy="42.3" r="2" fill="#fff" stroke="#111" stroke-width="1"/><circle cx="739.2" cy="42.3" r="2" fill="#fff" stroke="#111" stroke-width="1"/><circle cx="1241.5" cy="34.6" r="4.7" fill="none" stroke="#7b7b7b" stroke-width="1.8"/><path d="M1245 38.4 L1249.4 42.4" stroke="#7b7b7b" stroke-width="2.2" stroke-linecap="round"/><rect x="1259.1" y="28.1" width="15.8" height="15.5" fill="#cdcdcd"/><circle cx="1267" cy="34" r="3.1" fill="#fff"/><path d="M1262 43.6 V40.2 C1262 38.6 1272 38.6 1272 40.2 V43.6 Z" fill="#fff"/><path d="M156.79999999999998 53 L162.6 64.8 L156.79999999999998 76.5" fill="none" stroke="#a9a9a9" stroke-width="1"/><path d="M157.79999999999998 53 L163.6 64.8 L157.79999999999998 76.5" fill="none" stroke="#e9e9e9" stroke-width="0.8"/><path d="M214.1 53 L219.9 64.8 L214.1 76.5" fill="none" stroke="#a9a9a9" stroke-width="1"/><path d="M215.1 53 L220.9 64.8 L215.1 76.5" fill="none" stroke="#e9e9e9" stroke-width="0.8"/><path d="M266.4 53 L272.2 64.8 L266.4 76.5" fill="none" stroke="#a9a9a9" stroke-width="1"/><path d="M267.4 53 L273.2 64.8 L267.4 76.5" fill="none" stroke="#e9e9e9" stroke-width="0.8"/><path d="M330.0 53 L335.8 64.8 L330.0 76.5" fill="none" stroke="#a9a9a9" stroke-width="1"/><path d="M331.0 53 L336.8 64.8 L331.0 76.5" fill="none" stroke="#e9e9e9" stroke-width="0.8"/><path d="M386.2 53 L392 64.8 L386.2 76.5" fill="none" stroke="#a9a9a9" stroke-width="1"/><path d="M387.2 53 L393 64.8 L387.2 76.5" fill="none" stroke="#e9e9e9" stroke-width="0.8"/><path d="M449.2 53 L455 64.8 L449.2 76.5" fill="none" stroke="#a9a9a9" stroke-width="1"/><path d="M450.2 53 L456 64.8 L450.2 76.5" fill="none" stroke="#e9e9e9" stroke-width="0.8"/><path d="M537.95 53 L543.75 64.8 L537.95 76.5" fill="none" stroke="#a9a9a9" stroke-width="1"/><path d="M538.95 53 L544.75 64.8 L538.95 76.5" fill="none" stroke="#e9e9e9" stroke-width="0.8"/><path d="M616.6 53 L622.4 64.8 L616.6 76.5" fill="none" stroke="#a9a9a9" stroke-width="1"/><path d="M617.6 53 L623.4 64.8 L617.6 76.5" fill="none" stroke="#e9e9e9" stroke-width="0.8"/><path d="M769.5 53 L775.3 64.8 L769.5 76.5" fill="none" stroke="#a9a9a9" stroke-width="1"/><path d="M770.5 53 L776.3 64.8 L770.5 76.5" fill="none" stroke="#e9e9e9" stroke-width="0.8"/><path d="M882.4000000000001 53 L888.2 64.8 L882.4000000000001 76.5" fill="none" stroke="#a9a9a9" stroke-width="1"/><path d="M883.4000000000001 53 L889.2 64.8 L883.4000000000001 76.5" fill="none" stroke="#e9e9e9" stroke-width="0.8"/><path d="M9.8 59.1 H15.600000000000001 L17.1 61.0 H23.0 V62.4 H9.8 Z" fill="#bb8a50"/><rect x="10.5" y="61.4" width="11.799999999999999" height="8.6" fill="none" stroke="#bb8a50" stroke-width="1.4"/><rect x="18.8" y="65.8" width="5.6" height="5.6" fill="#6ba3d0"/><path d="M168 59.2 H173.8 L175.3 61.1 H181.2 V62.5 H168 Z" fill="#bb8a50"/><rect x="168.7" y="61.5" width="11.799999999999999" height="8.6" fill="none" stroke="#bb8a50" stroke-width="1.4"/><rect x="177" y="65.9" width="5.6" height="5.6" fill="#6ba3d0"/><path d="M225.4 59.1 H231.20000000000002 L232.70000000000002 61.0 H238.6 V62.4 H225.4 Z" fill="#bb8a50"/><rect x="226.1" y="61.4" width="11.799999999999999" height="8.2" fill="none" stroke="#bb8a50" stroke-width="1.4"/><path d="M277.4 59.1 H283.2 L284.7 61.0 H290.59999999999997 V62.4 H277.4 Z" fill="#bb8a50"/><rect x="278.09999999999997" y="61.4" width="11.799999999999999" height="8.2" fill="none" stroke="#bb8a50" stroke-width="1.4"/><path d="M341 59.1 H346.8 L348.3 61.0 H354.6 V62.4 H341 Z" fill="#6a9fc9"/><rect x="341.7" y="61.4" width="12.2" height="8.2" fill="none" stroke="#6a9fc9" stroke-width="1.4"/><path d="M398.2 59.1 H404.0 L405.5 61.0 H411.59999999999997 V62.4 H398.2 Z" fill="#bb8a50"/><rect x="398.9" y="61.4" width="12.0" height="8.2" fill="none" stroke="#bb8a50" stroke-width="1.4"/><circle cx="403.09999999999997" cy="66.0" r="1.55" fill="#5a9dd0"/><path d="M459.6 59.1 H465.40000000000003 L466.90000000000003 61.0 H473.0 V62.4 H459.6 Z" fill="#bb8a50"/><rect x="460.3" y="61.4" width="12.0" height="8.2" fill="none" stroke="#bb8a50" stroke-width="1.4"/><circle cx="464.5" cy="66.0" r="1.55" fill="#5a9dd0"/><path d="M549.8 59.1 H555.5999999999999 L557.0999999999999 61.0 H563.1999999999999 V62.4 H549.8 Z" fill="#bb8a50"/><rect x="550.5" y="61.4" width="12.0" height="8.2" fill="none" stroke="#bb8a50" stroke-width="1.4"/><circle cx="554.6999999999999" cy="66.0" r="1.55" fill="#5a9dd0"/><path d="M629.2 59.1 H635.0 L636.5 61.0 H642.6 V62.4 H629.2 Z" fill="#bb8a50"/><rect x="629.9000000000001" y="61.4" width="12.0" height="8.2" fill="none" stroke="#bb8a50" stroke-width="1.4"/><circle cx="634.1" cy="66.0" r="1.55" fill="#5a9dd0"/><circle cx="787.7" cy="65" r="6.8" fill="#a6d3f2" stroke="#88c2ea" stroke-width="1"/><path d="M789.9000000000001 63 A2.8 2.8 0 1 0 789.9000000000001 67" fill="none" stroke="#404040" stroke-width="1.3"/><path d="M25.4 108.6 H34.2 L29.799999999999997 116.19999999999999 Z" fill="#a8a8a8"/><path d="M45.1 106.4 H50.9 L52.4 108.30000000000001 H58.900000000000006 V109.7 H45.1 Z" fill="#bb8a50"/><rect x="45.800000000000004" y="108.7" width="12.4" height="8.2" fill="#ffffff" stroke="#bb8a50" stroke-width="1.4"/><rect x="54.1" y="113.10000000000001" width="5.6" height="5.6" fill="#6ba3d0"/><path d="M46 129.10000000000002 L53.6 133.50000000000003 L46 137.90000000000003 Z" fill="#a8a8a8"/><path d="M65.1 127.80000000000001 H70.89999999999999 L72.39999999999999 129.70000000000002 H78.89999999999999 V131.10000000000002 H65.1 Z" fill="#6a9fc9"/><rect x="65.8" y="130.10000000000002" width="12.4" height="8.2" fill="#ffffff" stroke="#6a9fc9" stroke-width="1.4"/><path d="M46 151.2 H54.8 L50.4 158.79999999999998 Z" fill="#a8a8a8"/><path d="M65.1 149.1 H70.89999999999999 L72.39999999999999 151.0 H78.89999999999999 V152.4 H65.1 Z" fill="#6a9fc9"/><rect x="65.8" y="151.4" width="12.4" height="8.2" fill="#ffffff" stroke="#6a9fc9" stroke-width="1.4"/><path d="M65 172.5 H73.8 L69.4 180.1 Z" fill="#a8a8a8"/><path d="M84.7 170.0 H90.5 L92.0 171.9 H98.5 V173.3 H84.7 Z" fill="#bb8a50"/><rect x="85.4" y="172.3" width="12.4" height="8.6" fill="#ffffff" stroke="#bb8a50" stroke-width="1.4"/><circle cx="89.60000000000001" cy="176.9" r="1.55" fill="#5a9dd0"/><circle cx="110.9" cy="197.29999999999998" r="6.8" fill="#a6d3f2" stroke="#88c2ea" stroke-width="1"/><path d="M113.10000000000001 195.29999999999998 A2.8 2.8 0 1 0 113.10000000000001 199.29999999999998" fill="none" stroke="#404040" stroke-width="1.3"/><path d="M122.6 196.6 V194.79999999999998 A2.3 2.3 0 0 1 127.2 194.79999999999998" fill="none" stroke="#5aad5a" stroke-width="1.3"/><rect x="124.2" y="196.89999999999998" width="6.8" height="5" fill="#5aad5a"/><path d="M126.4 198.2 L127.6 200.39999999999998 L128.8 198.2" fill="#fff"/><path d="M65.8 214.2 L73.39999999999999 218.6 L65.8 223.0 Z" fill="#a8a8a8"/><path d="M84.7 212.6 H90.5 L92.0 214.5 H98.5 V215.9 H84.7 Z" fill="#bb8a50"/><rect x="85.4" y="214.9" width="12.4" height="8.6" fill="#eff7e8" stroke="#bb8a50" stroke-width="1.4"/><circle cx="89.60000000000001" cy="219.5" r="1.55" fill="#5a9dd0"/><path d="M65.8 235.5 L73.39999999999999 239.9 L65.8 244.3 Z" fill="#a8a8a8"/><path d="M84.7 233.9 H90.5 L92.0 235.8 H98.5 V237.20000000000002 H84.7 Z" fill="#bb8a50"/><rect x="85.4" y="236.20000000000002" width="12.4" height="8.6" fill="#eff7e8" stroke="#bb8a50" stroke-width="1.4"/><circle cx="89.60000000000001" cy="240.8" r="1.55" fill="#5a9dd0"/><path d="M46 257.70000000000005 H54.8 L50.4 265.30000000000007 Z" fill="#a8a8a8"/><path d="M65 255.3 H70.8 L72.3 257.2 H78.9 V258.6 H65 Z" fill="#bb8a50"/><rect x="65.7" y="257.6" width="12.5" height="8.7" fill="#ffffff" stroke="#bb8a50" stroke-width="1.4"/><rect x="72.6" y="259.90000000000003" width="7.4" height="8" fill="#fff"/><rect x="73" y="260.3" width="7" height="1.9" fill="#f2b400"/><rect x="73" y="262.90000000000003" width="7" height="1.9" fill="#f2b400"/><rect x="73" y="265.5" width="7" height="1.9" fill="#f2b400"/><path d="M84.7 276.5 H90.5 L92.0 278.4 H98.5 V279.8 H84.7 Z" fill="#bb8a50"/><rect x="85.4" y="278.8" width="12.4" height="8.6" fill="#ffffff" stroke="#bb8a50" stroke-width="1.4"/><circle cx="89.60000000000001" cy="283.4" r="1.55" fill="#5a9dd0"/><path d="M65.2 299.40000000000003 L72.8 303.8 L65.2 308.20000000000005 Z" fill="#a8a8a8"/><path d="M84.7 297.80000000000007 H90.5 L92.0 299.70000000000005 H98.5 V301.1000000000001 H84.7 Z" fill="#bb8a50"/><rect x="85.4" y="300.1000000000001" width="12.4" height="8.6" fill="#ffffff" stroke="#bb8a50" stroke-width="1.4"/><circle cx="89.60000000000001" cy="304.70000000000005" r="1.55" fill="#5a9dd0"/><path d="M65.2 320.7 L72.8 325.09999999999997 L65.2 329.5 Z" fill="#a8a8a8"/><path d="M84.7 319.1 H90.5 L92.0 321.0 H98.5 V322.40000000000003 H84.7 Z" fill="#bb8a50"/><rect x="85.4" y="321.40000000000003" width="12.4" height="8.6" fill="#ffffff" stroke="#bb8a50" stroke-width="1.4"/><circle cx="89.60000000000001" cy="326.0" r="1.55" fill="#5a9dd0"/><path d="M65.2 342.90000000000003 H74.0 L69.60000000000001 350.50000000000006 Z" fill="#a8a8a8"/><path d="M84.7 340.40000000000003 H90.5 L92.0 342.3 H98.5 V343.70000000000005 H84.7 Z" fill="#bb8a50"/><rect x="85.4" y="342.70000000000005" width="12.4" height="8.6" fill="#ffffff" stroke="#bb8a50" stroke-width="1.4"/><circle cx="89.60000000000001" cy="347.3" r="1.55" fill="#5a9dd0"/><path d="M105.6 364.80000000000007 V360.80000000000007 H114 L116 362.80000000000007 V364.80000000000007" fill="#fff" stroke="#8c8c8c" stroke-width="1.2"/><rect x="105" y="364.90000000000003" width="13" height="6.9" fill="#f2a43a"/><path d="M110 366.20000000000005 L108 368.35 L110 370.50000000000006 M113 366.20000000000005 L115 368.35 L113 370.50000000000006" fill="none" stroke="#3a3a3a" stroke-width="1.1"/><rect x="105.2" y="372.6" width="10.8" height="2" fill="#8c8c8c"/><path d="M85.6 384.6 L93.19999999999999 389.0 L85.6 393.40000000000003 Z" fill="#a8a8a8"/><path d="M104 383.00000000000006 H109.8 L111.3 384.90000000000003 H117.8 V386.30000000000007 H104 Z" fill="#bb8a50"/><rect x="104.7" y="385.30000000000007" width="12.4" height="8.6" fill="#ffffff" stroke="#bb8a50" stroke-width="1.4"/><circle cx="108.9" cy="389.90000000000003" r="1.55" fill="#5a9dd0"/><path d="M105.6 407.40000000000003 V403.40000000000003 H114 L116 405.40000000000003 V407.40000000000003" fill="#fff" stroke="#8c8c8c" stroke-width="1.2"/><rect x="105" y="407.5" width="13" height="6.9" fill="#f2a43a"/><path d="M110 408.8 L108 410.95 L110 413.1 M113 408.8 L115 410.95 L113 413.1" fill="none" stroke="#3a3a3a" stroke-width="1.1"/><rect x="105.2" y="415.2" width="10.8" height="2" fill="#8c8c8c"/><path d="M105.6 428.70000000000005 V424.70000000000005 H114 L116 426.70000000000005 V428.70000000000005" fill="#fff" stroke="#8c8c8c" stroke-width="1.2"/><rect x="105" y="428.8" width="13" height="6.9" fill="#f2a43a"/><path d="M110 430.1 L108 432.25 L110 434.40000000000003 M113 430.1 L115 432.25 L113 434.40000000000003" fill="none" stroke="#3a3a3a" stroke-width="1.1"/><rect x="105.2" y="436.5" width="10.8" height="2" fill="#8c8c8c"/><path d="M26.3 448.5 L33.9 452.9 L26.3 457.3 Z" fill="#a8a8a8"/><path d="M48.5 449.0 A5.9 5.9 0 1 0 58.0 454.8" fill="none" stroke="#8cc152" stroke-width="2"/><path d="M50.5 447.70000000000005 A5.9 5.9 0 0 1 58.0 452.20000000000005" fill="none" stroke="#179c4a" stroke-width="2"/><circle cx="52.1" cy="453.6" r="2.4" fill="#179c4a"/><g transform="translate(39.1 80.8) scale(1.02)"><path d="M-4.6 5.2 A4.6 4.4 0 0 1 4.6 5.2 Z" fill="#8cb51f"/><path d="M-3 0.4 L-2 2 M3 0.4 L2 2" stroke="#8cb51f" stroke-width="0.9"/><circle cx="-1.8" cy="3.4" r="0.65" fill="#fff"/><circle cx="1.8" cy="3.4" r="0.65" fill="#fff"/><rect x="-4.6" y="5.9" width="9.2" height="5.6" rx="0.6" fill="#8cb51f"/><rect x="-6.8" y="5.9" width="1.7" height="4.6" rx="0.85" fill="#8cb51f"/><rect x="5.1" y="5.9" width="1.7" height="4.6" rx="0.85" fill="#8cb51f"/><rect x="-3" y="11" width="1.7" height="3" rx="0.85" fill="#8cb51f"/><rect x="1.3" y="11" width="1.7" height="3" rx="0.85" fill="#8cb51f"/></g><path d="M102.3 88 H109 L105.65 91.7 Z" fill="#6a6a6a"/><circle cx="126" cy="88.9" r="5.3" fill="none" stroke="#7c7c7c" stroke-width="1.5"/><path d="M126 83.6 V86 M126 91.8 V94.2 M120.7 88.9 H123.1 M128.9 88.9 H131.3" stroke="#7c7c7c" stroke-width="1.5"/><path d="M141.4 87.6 H152.7 M141.4 90.4 H152.7" stroke="#7c7c7c" stroke-width="1.1"/><path d="M147.05 83.4 V86.4 M147.05 91.6 V95.2" stroke="#7c7c7c" stroke-width="1"/><path d="M145.2 84.8 L147.05 86.8 L148.9 84.8 Z M145.2 93.4 L147.05 91.2 L148.9 93.4 Z" fill="#7c7c7c"/><rect x="174.7" y="83.3" width="2.6" height="3" fill="#7c7c7c" transform="rotate(0 176 88.9)"/><rect x="174.7" y="83.3" width="2.6" height="3" fill="#7c7c7c" transform="rotate(45 176 88.9)"/><rect x="174.7" y="83.3" width="2.6" height="3" fill="#7c7c7c" transform="rotate(90 176 88.9)"/><rect x="174.7" y="83.3" width="2.6" height="3" fill="#7c7c7c" transform="rotate(135 176 88.9)"/><rect x="174.7" y="83.3" width="2.6" height="3" fill="#7c7c7c" transform="rotate(180 176 88.9)"/><rect x="174.7" y="83.3" width="2.6" height="3" fill="#7c7c7c" transform="rotate(225 176 88.9)"/><rect x="174.7" y="83.3" width="2.6" height="3" fill="#7c7c7c" transform="rotate(270 176 88.9)"/><rect x="174.7" y="83.3" width="2.6" height="3" fill="#7c7c7c" transform="rotate(315 176 88.9)"/><circle cx="176" cy="88.9" r="4.0" fill="#7c7c7c"/><circle cx="176" cy="88.9" r="1.4" fill="#e4e4e4"/><path d="M184.4 88.2 H189 L186.7 91 Z" fill="#7c7c7c"/><rect x="197.9" y="83.9" width="3.1" height="10.9" fill="#7c7c7c"/><rect x="198.9" y="89.8" width="1.1" height="4" fill="#e4e4e4"/><path d="M203 87.6 H209.6" stroke="#7c7c7c" stroke-width="1.1"/><path d="M202.6 87.6 L205.6 85.2 V90 Z" fill="#7c7c7c"/><path d="M227.6 85.89999999999999 V81.89999999999999 H236 L238 83.89999999999999 V85.89999999999999" fill="#fff" stroke="#8c8c8c" stroke-width="1.2"/><rect x="227" y="86.0" width="13" height="6.9" fill="#f2a43a"/><path d="M232 87.3 L230 89.45 L232 91.6 M235 87.3 L237 89.45 L235 91.6" fill="none" stroke="#3a3a3a" stroke-width="1.1"/><rect x="227.2" y="93.7" width="10.8" height="2" fill="#8c8c8c"/><circle cx="397.1" cy="89.2" r="6.9" fill="#a6d3f2" stroke="#88c2ea" stroke-width="1"/><path d="M399.3 87.2 A2.8 2.8 0 1 0 399.3 91.2" fill="none" stroke="#404040" stroke-width="1.3"/><path d="M366.2 86.2 L372.59999999999997 92.60000000000001 M372.59999999999997 86.2 L366.2 92.60000000000001" stroke="#6e6e6e" stroke-width="1.3"/><path d="M525.4 86.2 L531.8000000000001 92.60000000000001 M531.8000000000001 86.2 L525.4 92.60000000000001" stroke="#6e6e6e" stroke-width="1.3"/><path d="M224.6 167.9 V163.9 H233 L235 165.9 V167.9" fill="#fff" stroke="#8c8c8c" stroke-width="1.2"/><rect x="224" y="168.0" width="13" height="6.9" fill="#f2a43a"/><path d="M229 169.3 L227 171.45000000000002 L229 173.60000000000002 M232 169.3 L234 171.45000000000002 L232 173.60000000000002" fill="none" stroke="#3a3a3a" stroke-width="1.1"/><rect x="224.2" y="175.70000000000002" width="10.8" height="2" fill="#8c8c8c"/><circle cx="228.1" cy="272.8" r="3.9" fill="#5ab4e8"/><circle cx="228.1" cy="272.8" r="1.5" fill="#9fdcff" stroke="#3e3e3e" stroke-width="0.9"/><path d="M233.5 268 V277.8" stroke="#d44a3a" stroke-width="1.2"/><path d="M231 269.2 L233.5 266 L236 269.2 Z" fill="#d44a3a"/><rect x="250.7" y="138.5" width="8" height="8" fill="#fff" stroke="#c4c4c4" stroke-width="0.9"/><path d="M252.6 142.5 H256.8 M254.7 140.4 V144.6" stroke="#8a8a8a" stroke-width="0.9"/><path d="M250.6 269.4 H258.4 V275.4 L254.5 279.0 L250.6 275.4 Z" fill="#fff" stroke="#c8c8c8" stroke-width="0.9"/><path d="M252.4 273.79999999999995 H256.6" stroke="#a8a8a8" stroke-width="0.8"/><path d="M250.6 321.20000000000005 H258.4 V315.20000000000005 L254.5 311.6 L250.6 315.20000000000005 Z" fill="#fff" stroke="#c8c8c8" stroke-width="0.9"/><path d="M252.4 316.8 H256.6" stroke="#a8a8a8" stroke-width="0.8"/><path d="M250.6 340.4 H258.4 V346.4 L254.5 350.0 L250.6 346.4 Z" fill="#fff" stroke="#c8c8c8" stroke-width="0.9"/><path d="M252.4 344.79999999999995 H256.6" stroke="#a8a8a8" stroke-width="0.8"/><path d="M250.6 596.6 H258.4 V590.6 L254.5 587 L250.6 590.6 Z" fill="#fff" stroke="#c8c8c8" stroke-width="0.9"/><path d="M252.4 592.2 H256.6" stroke="#a8a8a8" stroke-width="0.8"/><circle cx="273.4" cy="589.4" r="4.6" fill="#f6b73c"/><circle cx="273.4" cy="588.8" r="2.2" fill="#fbd27a"/><rect x="271" y="593.6" width="4.8" height="1.3" fill="#7d7d7d"/><rect x="271" y="595.4" width="4.8" height="1.3" fill="#7d7d7d"/><rect x="271.6" y="597.2" width="3.6" height="1.4" fill="#7d7d7d"/><circle cx="11.3" cy="149.6" r="5.7" fill="#7dc243"/><path d="M11.3 145 L9.6 149 L7 156 M11.3 145 L13 149 L15.6 156" stroke="#fff" stroke-width="1.1" fill="none"/><circle cx="11.3" cy="147.3" r="1.5" fill="#6b6b6b"/><path d="M8.6 152.2 H14" stroke="#fff" stroke-width="0.9"/><path d="M7.5 249 H15.3 L11.3 257 Z" fill="none" stroke="#555" stroke-width="1"/><circle cx="7.5" cy="249" r="2.6" fill="#4a90d0"/><circle cx="15.3" cy="249" r="2.6" fill="#e06060"/><circle cx="11.3" cy="257" r="2.4" fill="#d4902c"/><circle cx="11.4" cy="343.6" r="4.6" fill="#64aee6" stroke="#7a7a7a" stroke-width="1"/><path d="M6.8 337.6 L8.4 339.2 M11.4 343.6 L13.4 341.6" stroke="#6a6a6a" stroke-width="1"/><g transform="translate(11.2 546.2) scale(0.9)"><path d="M-4.6 5.2 A4.6 4.4 0 0 1 4.6 5.2 Z" fill="#8cb51f"/><path d="M-3 0.4 L-2 2 M3 0.4 L2 2" stroke="#8cb51f" stroke-width="0.9"/><circle cx="-1.8" cy="3.4" r="0.65" fill="#fff"/><circle cx="1.8" cy="3.4" r="0.65" fill="#fff"/><rect x="-4.6" y="5.9" width="9.2" height="5.6" rx="0.6" fill="#8cb51f"/><rect x="-6.8" y="5.9" width="1.7" height="4.6" rx="0.85" fill="#8cb51f"/><rect x="5.1" y="5.9" width="1.7" height="4.6" rx="0.85" fill="#8cb51f"/><rect x="-3" y="11" width="1.7" height="3" rx="0.85" fill="#8cb51f"/><rect x="1.3" y="11" width="1.7" height="3" rx="0.85" fill="#8cb51f"/></g><polygon points="11.30,652.80 12.95,657.13 17.58,657.36 13.96,660.27 15.18,664.74 11.30,662.20 7.42,664.74 8.64,660.27 5.02,657.36 9.65,657.13" fill="#e6a03a"/><path d="M1265.0 88.60000000000001 A5.6 5.6 0 1 0 1274.1999999999998 94.4" fill="none" stroke="#8cc152" stroke-width="2"/><path d="M1267.0 87.60000000000001 A5.6 5.6 0 0 1 1274.1999999999998 91.8" fill="none" stroke="#179c4a" stroke-width="2"/><circle cx="1268.6" cy="93.2" r="2.4" fill="#179c4a"/><g transform="translate(1268.5 562.4) scale(0.86)"><path d="M-4.6 5.2 A4.6 4.4 0 0 1 4.6 5.2 Z" fill="#8cb51f"/><path d="M-3 0.4 L-2 2 M3 0.4 L2 2" stroke="#8cb51f" stroke-width="0.9"/><circle cx="-1.8" cy="3.4" r="0.65" fill="#fff"/><circle cx="1.8" cy="3.4" r="0.65" fill="#fff"/><rect x="-4.6" y="5.9" width="9.2" height="5.6" rx="0.6" fill="#8cb51f"/><rect x="-6.8" y="5.9" width="1.7" height="4.6" rx="0.85" fill="#8cb51f"/><rect x="5.1" y="5.9" width="1.7" height="4.6" rx="0.85" fill="#8cb51f"/><rect x="-3" y="11" width="1.7" height="3" rx="0.85" fill="#8cb51f"/><rect x="1.3" y="11" width="1.7" height="3" rx="0.85" fill="#8cb51f"/></g><path d="M70 650.6 L82.2 657.8 L70 665 Z" fill="#b2b2b2"/><path d="M230.6 651.2 H234.6 L235.6 652.4 H243.6 V662.4 H230.6 Z" fill="none" stroke="#b89a6a" stroke-width="1.3" opacity="0.8"/><path d="M236 663.4 A4.8 4.8 0 0 1 245.6 663.4 Z" fill="#8aa53a"/><path d="M237.6 657.2 L238.8 659.2 M244.0 657.2 L242.79999999999998 659.2" stroke="#8aa53a" stroke-width="0.9"/><circle cx="238.60000000000002" cy="661.8" r="0.6" fill="#fff"/><circle cx="243.0" cy="661.8" r="0.6" fill="#fff"/><rect x="1215.7" y="652.3999999999999" width="2.6" height="3" fill="#858585" transform="rotate(0 1217 657.8)"/><rect x="1215.7" y="652.3999999999999" width="2.6" height="3" fill="#858585" transform="rotate(45 1217 657.8)"/><rect x="1215.7" y="652.3999999999999" width="2.6" height="3" fill="#858585" transform="rotate(90 1217 657.8)"/><rect x="1215.7" y="652.3999999999999" width="2.6" height="3" fill="#858585" transform="rotate(135 1217 657.8)"/><rect x="1215.7" y="652.3999999999999" width="2.6" height="3" fill="#858585" transform="rotate(180 1217 657.8)"/><rect x="1215.7" y="652.3999999999999" width="2.6" height="3" fill="#858585" transform="rotate(225 1217 657.8)"/><rect x="1215.7" y="652.3999999999999" width="2.6" height="3" fill="#858585" transform="rotate(270 1217 657.8)"/><rect x="1215.7" y="652.3999999999999" width="2.6" height="3" fill="#858585" transform="rotate(315 1217 657.8)"/><circle cx="1217" cy="657.8" r="3.8000000000000003" fill="#858585"/><circle cx="1217" cy="657.8" r="1.4" fill="#e4e4e4"/><path d="M1226 656.6 H1230.4 L1228.2 659.2 Z" fill="#858585"/><path d="M1245 652.6 V660" stroke="#858585" stroke-width="1.1"/><path d="M1242.6 657.6 L1245 660.6 L1247.4 657.6 Z" fill="#858585"/><rect x="1239.5" y="661.6" width="11.2" height="2.2" fill="#858585"/><path d="M30 682 L41.3 688.5 L30 695 Z" fill="url(#grn)"/><circle cx="108" cy="689.2" r="3.6" fill="#f4c27a"/><path d="M104.2 687.8 A3.8 3.8 0 0 1 111.8 687.8 Z" fill="#6b6b6b"/><rect x="103.6" y="692.6" width="8.8" height="3.4" rx="1.2" fill="#3d8fd6"/><ellipse cx="104" cy="683.9" rx="3" ry="2.1" fill="#fff" stroke="#555" stroke-width="0.9"/><g transform="translate(182 682.2) scale(0.82)"><path d="M-4.6 5.2 A4.6 4.4 0 0 1 4.6 5.2 Z" fill="#8cb51f"/><path d="M-3 0.4 L-2 2 M3 0.4 L2 2" stroke="#8cb51f" stroke-width="0.9"/><circle cx="-1.8" cy="3.4" r="0.65" fill="#fff"/><circle cx="1.8" cy="3.4" r="0.65" fill="#fff"/><rect x="-4.6" y="5.9" width="9.2" height="5.6" rx="0.6" fill="#8cb51f"/><rect x="-6.8" y="5.9" width="1.7" height="4.6" rx="0.85" fill="#8cb51f"/><rect x="5.1" y="5.9" width="1.7" height="4.6" rx="0.85" fill="#8cb51f"/><rect x="-3" y="11" width="1.7" height="3" rx="0.85" fill="#8cb51f"/><rect x="1.3" y="11" width="1.7" height="3" rx="0.85" fill="#8cb51f"/></g><rect x="327.4" y="683.6" width="9.6" height="9.6" fill="#d0d0d0" stroke="#7a7a7a" stroke-width="1"/><path d="M329.2 686 L331 687.6 L329.2 689.2 M331.4 690 H334" stroke="#555" stroke-width="0.8" fill="none"/><rect x="415" y="683.4" width="10.6" height="10.4" fill="#f8c87c" stroke="#e39a3c" stroke-width="1"/><path d="M417.2 686.2 H423.4 M417.2 688.6 H423.4 M417.2 691 H423.4" stroke="#8a6a3a" stroke-width="0.8"/><path d="M1037.6 682.6 H1048.6 V690 H1044 L1041.6 693 V690 H1037.6 Z" fill="#6cc070" stroke="#55a85a" stroke-width="0.6"/><path d="M1043.1 684 V687.4" stroke="#222" stroke-width="1.2"/><circle cx="1043.1" cy="688.9" r="0.6" fill="#222"/><rect x="1141.4" y="683.4" width="11.4" height="10.6" fill="#d4e6f6" stroke="#4a8cc6" stroke-width="1"/><path d="M1143.6 686.4 H1150.6 M1143.6 688.6 H1150.6 M1143.6 690.8 H1148.6" stroke="#444" stroke-width="0.8"/><rect x="9.6" y="704" width="12.8" height="9.8" fill="#c4c4c4" stroke="#555" stroke-width="0.9"/><rect x="9.1" y="715.6" width="13.7" height="1.1" fill="#444"/><path d="M986.4 708.8 L988.8 705.8 L991.1999999999999 708.8 Z M986.4 710.8 L988.8 713.8 L991.1999999999999 710.8 Z" fill="#444"/><path d="M1044.6 708.8 L1047.0 705.8 L1049.3999999999999 708.8 Z M1044.6 710.8 L1047.0 713.8 L1049.3999999999999 710.8 Z" fill="#444"/><path d="M1238.6 708.6 V706.6 A2.2 2.2 0 0 1 1243 706.6" fill="none" stroke="#8a8a8a" stroke-width="1.1"/><rect x="1239.6" y="708.6" width="7" height="5.8" fill="#8a8a8a"/><rect x="1241.6" y="710.2" width="3" height="2.6" fill="#e8e8e8"/><circle cx="1265.4" cy="710" r="5.4" fill="#f4f4f4" stroke="#777" stroke-width="1"/><path d="M1260 708.2 H1270.8" stroke="#777" stroke-width="1.1"/><circle cx="1263.4" cy="710.4" r="0.8" fill="#555"/><circle cx="1267.4" cy="710.4" r="0.8" fill="#555"/><path d="M1262.8 713.4 Q1265.4 711.6 1268 713.4" stroke="#555" stroke-width="0.8" fill="none"/></svg>
<div style="left:376.58px;top:38.78px;font-family:'Liberation Sans', sans-serif;font-size:14.5px;color:#000;line-height:0;white-space:pre;letter-spacing:0.666px;">app</div>
<div style="left:1048.00px;top:691.76px;font-family:'Liberation Sans', sans-serif;font-size:10.5px;color:#000;line-height:0;white-space:pre;font-weight:bold;">2</div>
</body></html>
